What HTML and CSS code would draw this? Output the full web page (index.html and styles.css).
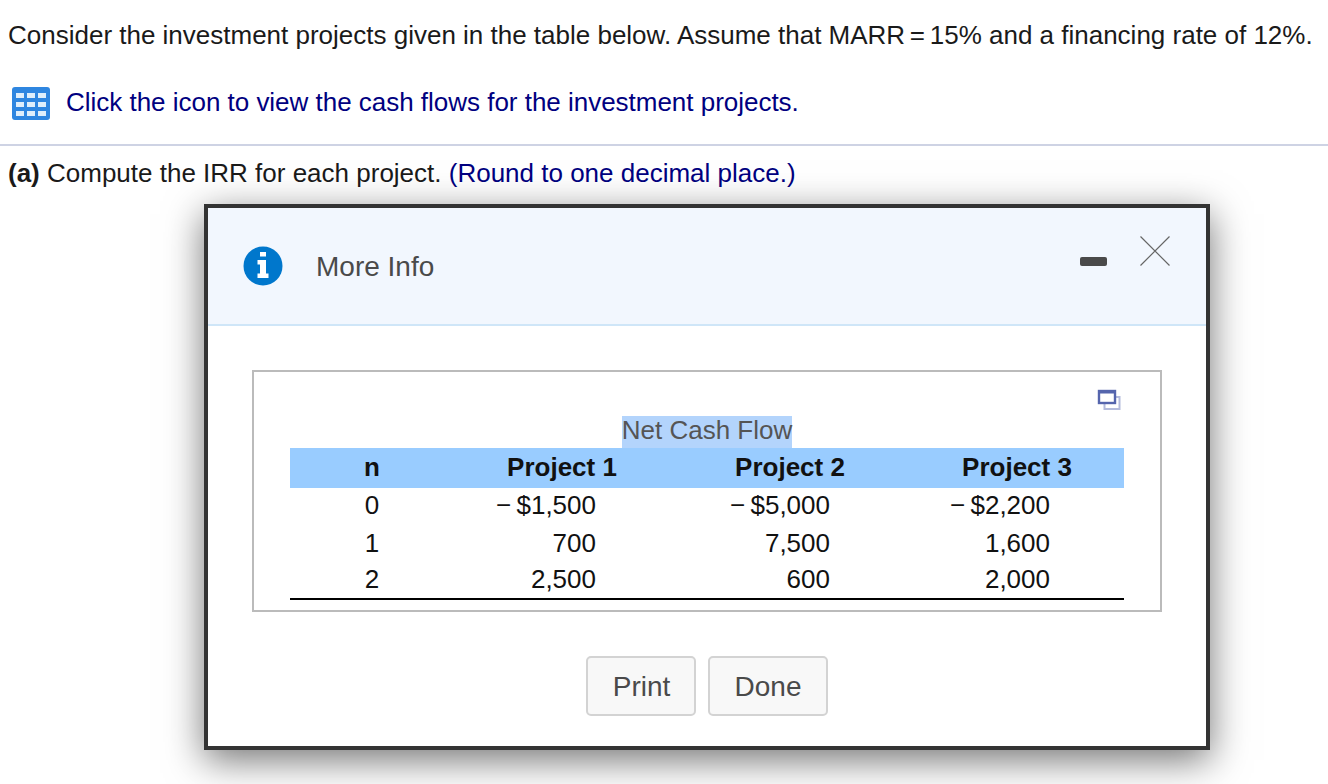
FILE: index.html
```html
<!DOCTYPE html>
<html lang="en">
<head>
<meta charset="utf-8">
<title>More Info</title>
<link rel="stylesheet" href="styles.css">
</head>
<body>
<main class="page">
  <p class="intro">Consider the investment projects given in the table below. Assume that MARR<span class="tight"> = </span>15% and a financing rate of 12%.</p>
  <p class="link-row">
    <svg class="grid-icon" width="38" height="33" viewBox="0 0 38 33" aria-hidden="true">
      <rect width="38" height="33" rx="3" fill="#2f86e0"/>
      <g fill="#dfeefb">
        <rect x="4" y="6" width="8" height="5"/><rect x="15" y="6" width="8" height="5"/><rect x="26" y="6" width="8" height="5"/>
        <rect x="4" y="15" width="8" height="5"/><rect x="15" y="15" width="8" height="5"/><rect x="26" y="15" width="8" height="5"/>
        <rect x="4" y="24" width="8" height="5"/><rect x="15" y="24" width="8" height="5"/><rect x="26" y="24" width="8" height="5"/>
      </g>
    </svg>
    <span class="blue link-text">Click the icon to view the cash flows for the investment projects.</span>
  </p>
  <hr class="rule">
  <p class="question"><b>(a)</b> Compute the IRR for each project. <span class="blue">(Round to one decimal place.)</span></p>
</main>

<section class="modal">
  <header class="modal-head">
    <svg class="info-icon" width="40" height="40" viewBox="0 0 40 40" aria-hidden="true">
      <circle cx="20" cy="20" r="19.5" fill="#0077cc"/>
      <path fill="#fff" d="M17 6h6v4.5h-6zM14.5 14H23v13.5h2.5V32h-11v-4.5H17V18.5h-2.5z"/>
    </svg>
    <h2 class="modal-title">More Info</h2>
    <span class="minimize"></span>
    <svg class="close" width="30" height="30" viewBox="0 0 30 30" aria-hidden="true">
      <path d="M.5.5l29 29M29.5.5l-29 29" stroke="#666" stroke-width="1.2" fill="none"/>
    </svg>
  </header>
  <div class="modal-body">
    <div class="table-box">
      <svg class="popout" width="26" height="22" viewBox="0 0 26 22" aria-hidden="true">
        <rect x="7.5" y="8" width="15" height="12" fill="#fff" stroke="#b4bbdc" stroke-width="2"/>
        <rect x="2" y="2" width="16" height="12" fill="#fff" stroke="#5565ad" stroke-width="2.4"/>
        <rect x="2" y="1" width="16" height="3.5" fill="#5565ad"/>
      </svg>
      <div class="caption"><span class="selected">Net Cash Flow</span></div>
      <table class="flows">
        <thead>
          <tr><th class="c-n">n</th><th class="c-1">Project 1</th><th class="c-2">Project 2</th><th class="c-3">Project 3</th></tr>
        </thead>
        <tbody>
          <tr class="row-a"><td class="c-n">0</td><td class="num-1">− $1,500</td><td class="num-2">− $5,000</td><td class="num-1">− $2,200</td></tr>
          <tr class="row-b"><td class="c-n">1</td><td class="num-1">700</td><td class="num-2">7,500</td><td class="num-1">1,600</td></tr>
          <tr class="row-c"><td class="c-n">2</td><td class="num-1">2,500</td><td class="num-2">600</td><td class="num-1">2,000</td></tr>
        </tbody>
      </table>
    </div>
    <div class="actions">
      <button class="btn btn-print" type="button">Print</button>
      <button class="btn btn-done" type="button">Done</button>
    </div>
  </div>
</section>
</body>
</html>
```
FILE: styles.css
```css
* { box-sizing: border-box; }
html, body { margin: 0; padding: 0; }
body {
  width: 1328px;
  height: 784px;
  overflow: hidden;
  background: #fff;
  color: #1a1a1a;
  font-family: "Liberation Sans", Arial, sans-serif;
  font-size: 26px;
  position: relative;
}
.page { padding: 19px 0 0 8px; }
.page p { margin: 0; line-height: 32px; }
.blue { color: #000080; }
.tight { word-spacing: -2.5px; }
.intro { word-spacing: -0.03px; }
.link-row { display: flex; align-items: center; gap: 16px; margin-top: 36px !important; padding-left: 4px; height: 32px; }
.link-text { position: relative; top: -1px; letter-spacing: -0.02px; }
.grid-icon { flex: none; filter: blur(.4px); }
.rule { border: 0; height: 2px; background: #ced3e4; margin: 25px 0 11px -8px; }
.modal {
  position: absolute;
  left: 204px;
  top: 204px;
  width: 1006px;
  height: 546px;
  background: #fff;
  border: 4px solid #333;
  box-shadow: 0 10px 36px rgba(0, 0, 0, .55);
  display: flex;
  flex-direction: column;
}
.modal-head {
  height: 118px;
  background: #f2f7fe;
  border-bottom: 2px solid #cfe6f8;
  display: flex;
  align-items: center;
  padding: 0 0 0 35px;
  flex: none;
}
.info-icon { flex: none; }
.modal-title { margin: 2px 0 0 33px; font-size: 28px; font-weight: 400; color: #4a4a4a; flex: 1; }
.minimize { width: 27px; height: 9px; border-radius: 2px; background: #4a4a4a; margin-top: -9px; }
.close { margin: -30px 36px 0 33px; }
.modal-body { flex: 1; padding: 44px 44px 0; display: flex; flex-direction: column; }
.table-box {
  height: 242px;
  border: 2px solid #bbb;
  padding: 44px 36px 0;
  position: relative;
}
.popout { position: absolute; right: 37px; top: 17px; }
.caption { text-align: center; height: 32px; line-height: 29px; color: #555; font-size: 26px; }
.selected { display: inline-block; background: #b3d4fc; height: 32px; }
.flows { border-collapse: collapse; table-layout: fixed; width: 834px; color: #111; font-size: 26px; border-bottom: 2px solid #000; }
.flows th { height: 40px; padding: 0 0 1px; background: #99ccff; font-weight: 700; text-align: center; }
.flows td { padding: 0; word-spacing: -2px; }
.row-a td { height: 35px; }
.row-b td { height: 39px; padding-top: 1px; }
.row-c td { height: 37px; padding-bottom: 1px; }
.c-n { width: 164px; text-align: center; }
.c-1 { width: 216px; }
.c-2 { width: 240px; }
.c-3 { width: 214px; }
.num-1 { text-align: right; padding-right: 74px !important; }
.num-2 { text-align: right; padding-right: 80px !important; }
.actions { display: flex; justify-content: center; gap: 12px; margin-top: 44px; }
.btn {
  height: 60px;
  background: #f8f8f8;
  border: 2px solid #d3d3d3;
  border-radius: 5px;
  color: #4a4a4a;
  font: 28px "Liberation Sans", Arial, sans-serif;
  padding: 2px 0 0;
}
.btn-print { width: 110px; padding-left: 1px; }
.btn-done { width: 120px; }
```
